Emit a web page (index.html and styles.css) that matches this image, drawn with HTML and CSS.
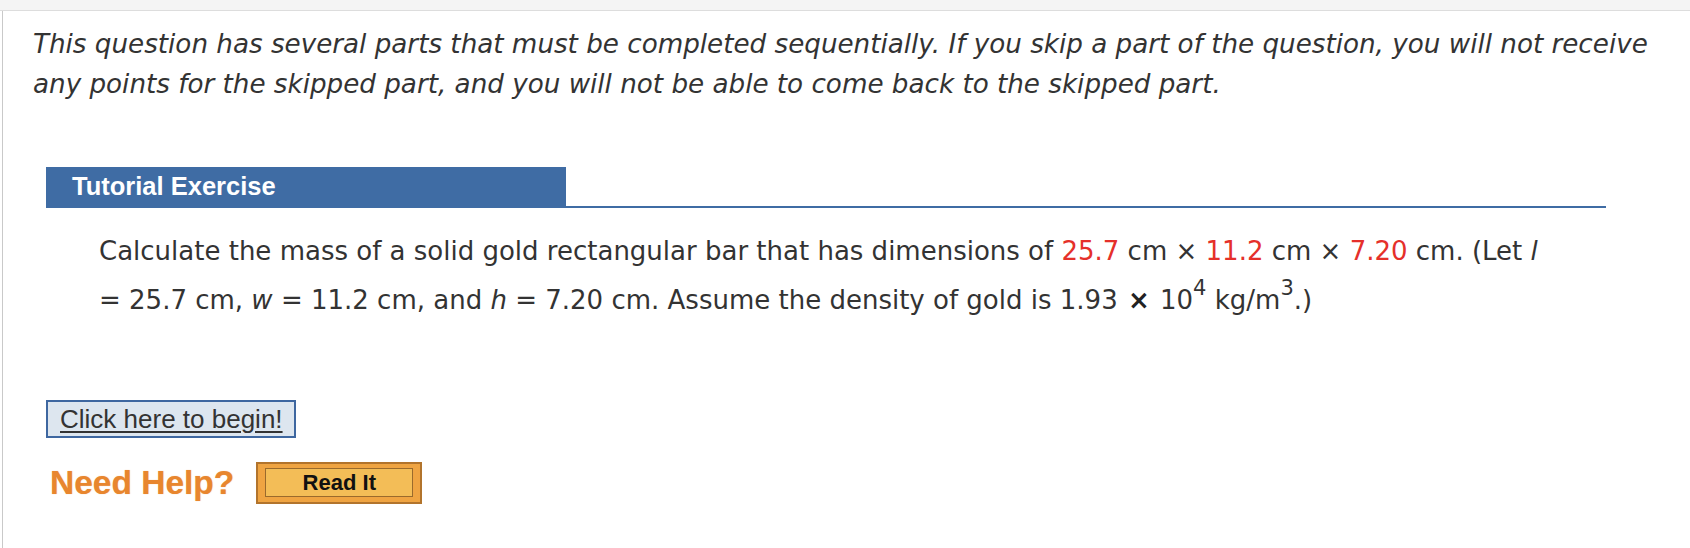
FILE: index.html
```html
<!DOCTYPE html>
<html>
<head>
<meta charset="utf-8">
<title>Tutorial Exercise</title>
<link rel="stylesheet" href="styles.css">
</head>
<body>
<div class="topbar"></div>
<div class="frame">
  <p class="intro">This question has several parts that must be completed sequentially. If you skip a part of the question, you will not receive<br>any points for the skipped part, and you will not be able to come back to the skipped part.</p>

  <div class="tut-head"><div class="tut-title">Tutorial Exercise</div></div>

  <p class="problem">Calculate the mass of a solid gold rectangular bar that has dimensions of <span class="red">25.7</span> cm × <span class="red">11.2</span> cm × <span class="red">7.20</span> cm. (Let <i>l</i><br>= 25.7 cm, <i>w</i> = 11.2 cm, and <i>h</i> = 7.20 cm. Assume the density of gold is <span class="sci">1.93 <b class="times">×</b> 10<sup>4</sup></span> kg/m<sup>3</sup>.)</p>

  <div class="begin"><a class="begin-link" href="#">Click here to begin!</a></div>

  <div class="help">
    <span class="help-label">Need Help?</span>
    <span class="readit"><span class="readit-inner">Read It</span></span>
  </div>
</div>
</body>
</html>
```

FILE: styles.css
```css
html, body {
  margin: 0;
  padding: 0;
  background: #ffffff;
}

body {
  font-family: "DejaVu Sans", Verdana, sans-serif;
  color: #333333;
}

.topbar {
  height: 10px;
  background: #f4f4f4;
  border-bottom: 1px solid #dddddd;
}

.frame {
  margin-left: 2px;
  border-left: 1px solid #c9c9c9;
  min-height: 537px;
  box-sizing: border-box;
  padding-top: 13px;
}

.intro {
  margin: 0 0 0 30px;
  font-style: italic;
  font-size: 26.2px;
  line-height: 40px;
  color: #333333;
  white-space: nowrap;
}

.tut-head {
  margin: 63px 0 0 43px;
  width: 1560px;
  border-bottom: 2px solid #3f6ca4;
}

.tut-title {
  width: 494px;
  height: 39px;
  padding-left: 26px;
  background: #3f6ca4;
  color: #ffffff;
  font-family: "Liberation Sans", Arial, sans-serif;
  font-weight: bold;
  font-size: 25.5px;
  display: flex;
  align-items: center;
}

.problem {
  margin: 19px 0 0 96px;
  font-size: 26px;
  line-height: 49px;
  color: #333333;
  white-space: nowrap;
}

.problem sup {
  font-size: 21px;
  line-height: 0;
  vertical-align: 14px;
}

.red {
  color: #e5302a;
}

.sci {
  font-size: 26px;
}

.times {
  font-size: 26px;
  color: #222222;
  margin: 0 2px;
}

.begin {
  margin: 75px 0 0 43px;
  width: 250px;
  height: 38px;
  box-sizing: border-box;
  border: 2px solid #3e67a0;
  background: #dde6ef;
  padding-left: 12px;
  display: flex;
  align-items: center;
}

.begin-link {
  font-family: "Liberation Sans", Arial, sans-serif;
  font-size: 26px;
  color: #333333;
  text-decoration: underline;
  text-decoration-thickness: 2px;
  text-underline-offset: 3px;
}

.help {
  margin: 24px 0 0 47px;
  display: flex;
  align-items: center;
  gap: 22px;
}

.help-label {
  font-family: "Liberation Sans", Arial, sans-serif;
  font-weight: bold;
  font-size: 33.5px;
  color: #e8862e;
  text-shadow: 0 0 1px rgba(232, 134, 46, 0.6);
}

.readit {
  width: 166px;
  height: 42px;
  box-sizing: border-box;
  border: 2px solid #b2742c;
  background: #efa442;
  padding: 4px 7px 5px 7px;
  display: flex;
}

.readit-inner {
  flex: 1;
  border: 1px solid #9a6a2c;
  background: #f3bd57;
  display: flex;
  align-items: center;
  justify-content: center;
  font-family: "Liberation Sans", Arial, sans-serif;
  font-weight: bold;
  font-size: 22px;
  color: #111111;
}
```
